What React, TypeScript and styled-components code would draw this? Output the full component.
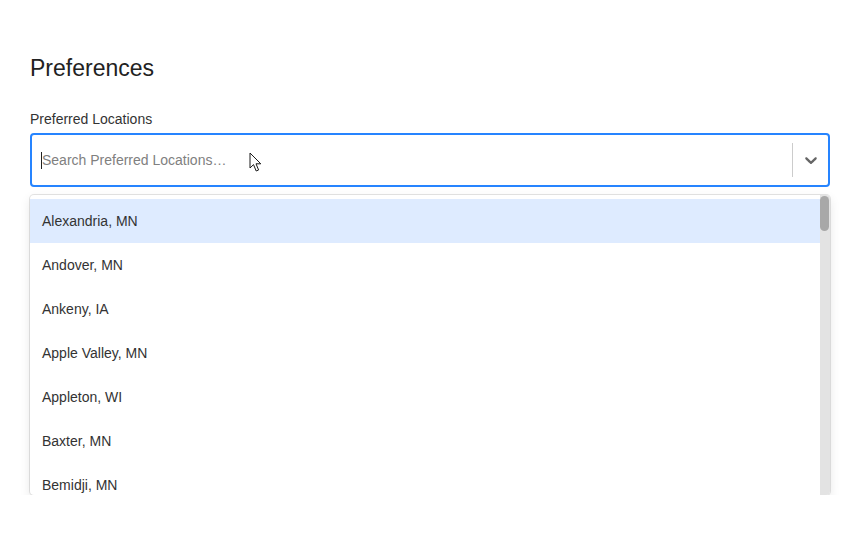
import React from 'react';
import styled, { createGlobalStyle } from 'styled-components';

// only the rows that fit in the open menu are shown
const locations: string[] = [
  'Alexandria, MN',
  'Andover, MN',
  'Ankeny, IA',
  'Apple Valley, MN',
  'Appleton, WI',
  'Baxter, MN',
  'Bemidji, MN',
];

// thumb size as a share of the whole list height
const thumbRatio = 0.115;

const App: React.FC = () => {
  return (
    <>
      <GlobalStyle />
      <Page>
        <Heading>Preferences</Heading>
        <Field>
          <Label>Preferred Locations</Label>
          <Control>
            <ValueContainer>
              <Caret />
              <Placeholder>Search Preferred Locations…</Placeholder>
            </ValueContainer>
            <Separator />
            <Indicator>
              <svg width="20" height="20" viewBox="0 0 20 20" aria-hidden="true">
                <path
                  fill="#666666"
                  d="M4.516 7.548c0.436-0.446 1.043-0.481 1.576 0l3.908 3.747 3.908-3.747c0.533-0.481 1.141-0.446 1.574 0 0.436 0.445 0.408 1.197 0 1.615-0.406 0.418-4.695 4.502-4.695 4.502-0.217 0.223-0.502 0.335-0.787 0.335s-0.57-0.112-0.789-0.335c0 0-4.287-4.084-4.695-4.502s-0.436-1.17 0-1.615z"
                />
              </svg>
            </Indicator>
            <Pointer width="13" height="21" viewBox="0 0 13 21" aria-hidden="true">
              <path
                d="M1 1 L1 16 L4.5 12.6 L7.2 19 L9.6 18 L7 11.8 L11.8 11.8 Z"
                fill="#ffffff"
                stroke="#1a1a1a"
                strokeWidth="1"
                strokeLinejoin="round"
              />
            </Pointer>
          </Control>
          <Menu>
            <MenuList>
              {locations.map((name, i) => (
                <Option key={name} $active={i === 0}>
                  {name}
                </Option>
              ))}
            </MenuList>
            <ScrollTrack>
              <ScrollThumb style={{ height: `${thumbRatio * 100}%` }} />
            </ScrollTrack>
          </Menu>
        </Field>
      </Page>
    </>
  );
};

export default App;

const GlobalStyle = createGlobalStyle`
  html, body {
    margin: 0;
    padding: 0;
    background: #ffffff;
  }
  body {
    font-family: "Liberation Sans", Arial, sans-serif;
    color: #333333;
  }
`;

const Page = styled.div`
  width: 800px;
  padding: 54px 20px 0 30px;
`;

const Heading = styled.h2`
  margin: 0 0 29px 0;
  font-size: 23px;
  line-height: 28px;
  font-weight: 400;
  color: #222222;
`;

const Field = styled.div`
  display: flex;
  flex-direction: column;
`;

const Label = styled.label`
  font-size: 14px;
  line-height: 16px;
  color: #333333;
  margin-bottom: 6px;
`;

const Control = styled.div`
  position: relative;
  display: flex;
  align-items: center;
  box-sizing: border-box;
  height: 54px;
  border: 2px solid #2684ff;
  border-radius: 4px;
  background: #ffffff;
`;

const ValueContainer = styled.div`
  flex: 1;
  display: flex;
  align-items: center;
  padding: 0 8px 0 9px;
`;

const Caret = styled.span`
  width: 1px;
  height: 17px;
  background: #222222;
`;

const Placeholder = styled.span`
  font-size: 14px;
  color: #808080;
`;

const Separator = styled.span`
  align-self: stretch;
  width: 1px;
  margin: 8px 0;
  background: #cccccc;
`;

const Indicator = styled.div`
  display: flex;
  padding: 8px 7px 8px 8px;
`;

const Pointer = styled.svg`
  position: absolute;
  left: 217px;
  top: 17px;
`;

const Menu = styled.div`
  display: flex;
  height: 300px;
  margin-top: 8px;
  border-radius: 4px;
  overflow: hidden;
  background: #ffffff;
  box-shadow: 0 0 0 1px rgba(0, 0, 0, 0.1), 0 4px 11px rgba(0, 0, 0, 0.1);
`;

const MenuList = styled.div`
  flex: 1;
  padding-top: 4px;
  overflow: hidden;
`;

const ScrollTrack = styled.div`
  width: 10px;
  background: #e3e3e3;
`;

const ScrollThumb = styled.div`
  margin-top: 1px;
  width: 9px;
  border-radius: 5px;
  background: #a8a8a8;
`;

const Option = styled.div<{ $active?: boolean }>`
  display: flex;
  align-items: center;
  height: 44px;
  padding: 0 12px;
  font-size: 14px;
  color: #333333;
  background: ${(p) => (p.$active ? '#deebff' : 'transparent')};
`;
